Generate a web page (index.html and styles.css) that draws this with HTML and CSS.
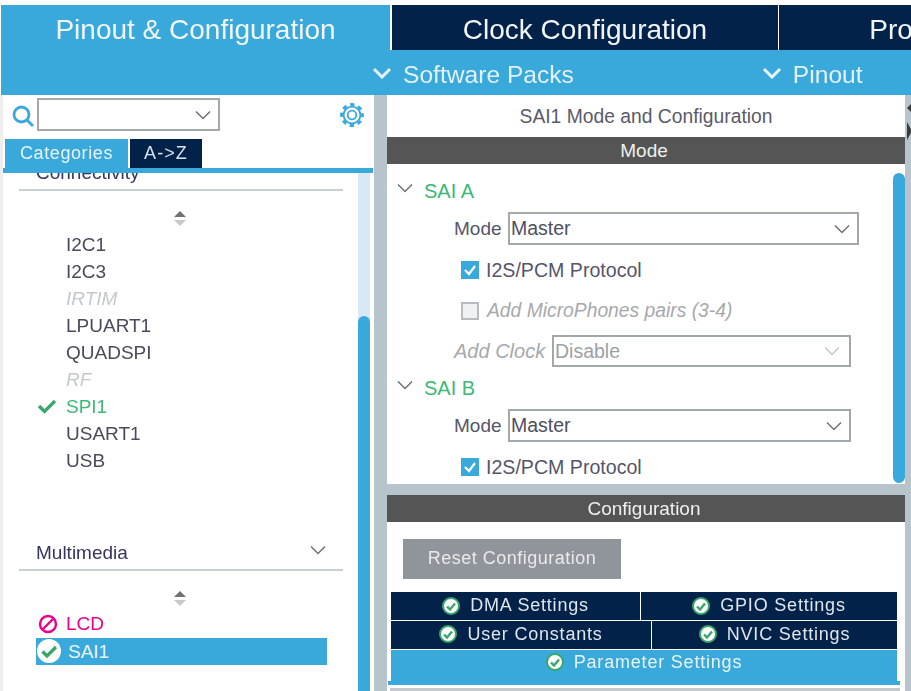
FILE: index.html
```html
<!DOCTYPE html>
<html lang="en">
<head>
<meta charset="utf-8">
<title>Pinout &amp; Configuration</title>
<link rel="stylesheet" href="styles.css">
</head>
<body>
<div class="app">
  <nav class="main-tabs">
    <div class="main-tab active">Pinout &amp; Configuration</div>
    <div class="main-tab">Clock Configuration</div>
    <div class="main-tab">Project Manager</div>
  </nav>
  <div class="subbar">
    <div class="sub-item packs"><svg class="sub-chev" viewBox="0 0 20 12"><path d="M2 2l8 8 8-8"/></svg>Software Packs</div>
    <div class="sub-item pinout"><svg class="sub-chev" viewBox="0 0 20 12"><path d="M2 2l8 8 8-8"/></svg>Pinout</div>
  </div>
  <div class="workspace">
    <aside class="left">
      <div class="search-row">
        <svg class="search-icon" viewBox="0 0 22 22"><circle cx="9.5" cy="9.5" r="7.5"/><path d="M15 15l6 6"/></svg>
        <div class="select search-select"><svg class="chev" viewBox="0 0 16 10"><path d="M1 1.5l7 7 7-7"/></svg></div>
        <svg class="gear" viewBox="0 0 24 24"><circle class="teeth" cx="12" cy="12" r="10.400"/><circle cx="12" cy="12" r="8.400"/><circle cx="12" cy="12" r="4.300"/></svg>
      </div>
      <div class="cat-tabs">
        <div class="cat-tab on">Categories</div>
        <div class="cat-tab">A-&gt;Z</div>
      </div>
      <div class="list-area">
        <div class="list-scroll">
          <div class="cat-head clipped"><span>Connectivity</span></div>
          <div class="sorter"><svg viewBox="0 0 14 16"><path class="up" d="M7 0l6 6H1z"/><path class="down" d="M1 9h12l-6 6z"/></svg></div>
          <ul class="items">
            <li>I2C1</li>
            <li>I2C3</li>
            <li class="off">IRTIM</li>
            <li>LPUART1</li>
            <li>QUADSPI</li>
            <li class="off">RF</li>
            <li class="ok"><svg class="tick" viewBox="0 0 20 16"><path d="M2 8l5.500 5.500L18 3"/></svg>SPI1</li>
            <li>USART1</li>
            <li>USB</li>
          </ul>
          <div class="cat-head second"><span>Multimedia</span><svg class="chev wide" viewBox="0 0 16 10"><path d="M1 1.500l7 7 7-7"/></svg></div>
          <div class="sorter"><svg viewBox="0 0 14 16"><path class="up" d="M7 0l6 6H1z"/><path class="down" d="M1 9h12l-6 6z"/></svg></div>
          <ul class="items">
            <li class="bad"><svg class="ban" viewBox="0 0 20 20"><circle cx="10" cy="10" r="8"/><path d="M4.500 15.500l11-11"/></svg>LCD</li>
            <li class="sel"><svg class="okdot" viewBox="0 0 24 24"><circle cx="12" cy="12" r="12"/><path d="M5.500 12.500l4.500 4.500 9-9"/></svg>SAI1</li>
          </ul>
        </div>
        <div class="track"><div class="thumb"></div></div>
      </div>
    </aside>
    <main class="right">
      <section class="mode-panel">
        <h1 class="panel-title">SAI1 Mode and Configuration</h1>
        <h2 class="bar">Mode</h2>
        <div class="mode-body">
          <div class="form">
            <div class="group-head"><svg class="chev head-chev" viewBox="0 0 16 10"><path d="M1 1.500l7 7 7-7"/></svg>SAI A</div>
            <div class="field first"><label class="flabel">Mode</label><div class="select sel-a">Master<svg class="chev" viewBox="0 0 16 10"><path d="M1 1.500l7 7 7-7"/></svg></div></div>
            <div class="check-row"><span class="cb on"><svg viewBox="0 0 18 18"><path d="M4 9l4 4 6-8"/></svg></span>I2S/PCM Protocol</div>
            <div class="check-row second dis"><span class="cb"></span>Add MicroPhones pairs (3-4)</div>
            <div class="field clock dis"><label class="flabel">Add Clock</label><div class="select sel-c">Disable<svg class="chev" viewBox="0 0 16 10"><path d="M1 1.500l7 7 7-7"/></svg></div></div>
            <div class="group-head b"><svg class="chev head-chev" viewBox="0 0 16 10"><path d="M1 1.500l7 7 7-7"/></svg>SAI B</div>
            <div class="field first"><label class="flabel">Mode</label><div class="select sel-b">Master<svg class="chev" viewBox="0 0 16 10"><path d="M1 1.500l7 7 7-7"/></svg></div></div>
            <div class="check-row"><span class="cb on"><svg viewBox="0 0 18 18"><path d="M4 9l4 4 6-8"/></svg></span>I2S/PCM Protocol</div>
          </div>
          <div class="mode-track"><div class="mode-thumb"></div></div>
        </div>
      </section>
      <section class="config-panel">
        <h2 class="bar">Configuration</h2>
        <button class="reset">Reset Configuration</button>
        <div class="set-tabs">
          <div class="set-row r1">
            <div class="set-tab"><svg class="dot" viewBox="0 0 18 18"><circle cx="9" cy="9" r="8"/><path d="M5 9.500l3 3 5-6"/></svg>DMA Settings</div>
            <div class="set-tab"><svg class="dot" viewBox="0 0 18 18"><circle cx="9" cy="9" r="8"/><path d="M5 9.500l3 3 5-6"/></svg>GPIO Settings</div>
          </div>
          <div class="set-row r2">
            <div class="set-tab"><svg class="dot" viewBox="0 0 18 18"><circle cx="9" cy="9" r="8"/><path d="M5 9.500l3 3 5-6"/></svg>User Constants</div>
            <div class="set-tab"><svg class="dot" viewBox="0 0 18 18"><circle cx="9" cy="9" r="8"/><path d="M5 9.500l3 3 5-6"/></svg>NVIC Settings</div>
          </div>
          <div class="set-tab param"><svg class="dot" viewBox="0 0 18 18"><circle cx="9" cy="9" r="8"/><path d="M5 9.500l3 3 5-6"/></svg>Parameter Settings</div>
        </div>
        <div class="param-line"></div>
        <div class="param-box"></div>
      </section>
    </main>
    <aside class="edge">
      <svg class="edge-arrows" viewBox="0 0 6 46"><path d="M6 0L1 5l5 5z"/><path d="M1 19l5 9-5 9z"/></svg>
    </aside>
  </div>
</div>
</body>
</html>
```

FILE: styles.css
```css
* { box-sizing: border-box; }
html, body { margin: 0; padding: 0; height: 100%; overflow: hidden; background: #fff; }
body { font-family: "Liberation Sans", Arial, sans-serif; color: #4a4a5a; }
h1, h2, ul { margin: 0; padding: 0; font-weight: normal; list-style: none; }
svg { display: block; flex: none; }
.app { width: 911px; height: 691px; padding-top: 5px; display: flex; flex-direction: column; overflow: hidden; filter: blur(0.4px); }

.main-tabs { display: flex; height: 45px; flex: none; padding-left: 1px; gap: 2px; }
.main-tab { flex: none; width: 389px; background: #032249; color: #f2f6fa; font-size: 28px; padding-top: 5px; display: flex; align-items: center; justify-content: center; white-space: nowrap; }
.main-tab + .main-tab { width: 386px; }
.main-tab + .main-tab + .main-tab { margin-left: -1px; }
.main-tab.active { background: #39a9dc; }

.subbar { height: 45px; flex: none; margin-left: 1px; background: #39a9dc; display: flex; color: #e2f1fa; font-size: 24.600px; padding-top: 5px; }
.sub-item { display: flex; align-items: center; gap: 11px; white-space: nowrap; }
.packs { margin-left: 371px; }
.pinout { margin-left: 188px; }
.sub-chev { width: 20px; height: 12px; margin-top: -5px; }
.sub-chev path { fill: none; stroke: #e8f4fb; stroke-width: 3; }

.workspace { flex: 1; min-height: 0; display: flex; background: #b8c4cb; }

.left { width: 374px; flex: none; background: #fff; border-left: 3px solid #eeeeee; display: flex; flex-direction: column; }
.search-row { height: 44px; flex: none; display: flex; align-items: flex-start; position: relative; }
.search-icon { width: 22px; height: 22px; margin: 10px 0 0 9px; }
.search-icon circle, .search-icon path { fill: none; stroke: #39a9dc; stroke-width: 2.800; }
.select { border: 2px solid #a3a8ac; background: #fff; display: flex; align-items: center; justify-content: space-between; font-size: 19.500px; padding: 0 7px 0 1px; color: #4f4f5f; white-space: nowrap; }
.chev path { fill: none; stroke: #6d7175; stroke-width: 1.500; }
.chev { width: 16px; height: 10px; }
.search-select { width: 183px; height: 33px; margin: 3px 0 0 3px; justify-content: flex-end; }
.gear { width: 24px; height: 24px; margin: 8px 0 0 120px; }
.gear circle { fill: none; stroke: #39a9dc; stroke-width: 1.800; }
.gear circle.teeth { stroke-width: 3; stroke-dasharray: 4.300 3.870; stroke-dashoffset: 2.150; }

.cat-tabs { display: flex; gap: 2px; height: 29px; flex: none; margin-left: 2px; }
.cat-tab { background: #032249; color: #d5e4ee; font-size: 18px; letter-spacing: 1.100px; display: flex; align-items: center; justify-content: center; width: 72px; }
.cat-tab.on { background: #39a9dc; width: 123px; color: #e6f3fa; letter-spacing: 0.600px; }

.list-area { flex: 1; min-height: 0; border-top: 5px solid #39a9dc; display: flex; overflow: hidden; margin-right: 1px; }
.list-scroll { width: 355px; flex: none; }
.track { width: 12px; flex: none; background: #d8e8f5; }
.thumb { height: 100%; margin-top: 143px; background: #39a9dc; border-radius: 6px 6px 0 0; }

.cat-head { height: 36px; margin: 0 15px 0 16px; border-bottom: 2px solid #c8d0d6; display: flex; align-items: center; justify-content: space-between; font-size: 19px; color: #35365f; padding: 1px 17px 0; }
.cat-head.clipped { margin-top: -18px; }
.cat-head.second { margin-top: 61px; }
.chev.wide { width: 16px; height: 10px; margin-top: -5px; }
.sorter { height: 40px; display: flex; justify-content: center; align-items: center; padding: 16px 1px 0 0; }
.sorter svg { width: 14px; height: 16px; }
.up { fill: #6e7276; }
.down { fill: #c6cacd; }

.items { margin-left: 33px; width: 291px; font-size: 19px; }
.items li { height: 27px; padding-left: 30px; display: flex; align-items: center; position: relative; color: #4a4a5a; }
.items li.off { color: #c3c8cd; font-style: italic; }
.items li.ok { color: #3cb878; }
.items li.bad { color: #ec008c; padding-bottom: 1px; }
.items li.sel { background: #39a9dc; color: #e8f4fb; padding-left: 32px; }
.tick, .ban, .okdot { position: absolute; }
.tick { width: 20px; height: 16px; left: 1px; top: 5px; }
.tick path { fill: none; stroke: #37a668; stroke-width: 3.200; }
.ban { width: 20px; height: 20px; left: 2px; top: 3px; }
.ban circle, .ban path { fill: none; stroke: #ec008c; stroke-width: 2.400; }
.okdot { width: 24px; height: 24px; left: 1px; top: 1px; }
.okdot circle { fill: #fff; }
.okdot path { fill: none; stroke: #37a668; stroke-width: 3.200; }

.right { flex: none; width: 518px; margin-left: 13px; display: flex; flex-direction: column; gap: 11px; min-height: 0; }
.mode-panel { height: 389px; flex: none; background: #fff; display: flex; flex-direction: column; }
.panel-title { height: 42px; flex: none; display: flex; align-items: center; justify-content: center; font-size: 19.300px; color: #5a5a68; padding-top: 1px; }
.bar { height: 27px; flex: none; background: #545554; color: #f0f0f0; font-size: 19px; padding-top: 1px; padding-right: 4px; display: flex; align-items: center; justify-content: center; }
.mode-body { flex: 1; min-height: 0; display: flex; overflow: hidden; }
.form { width: 506px; flex: none; padding-top: 9px; font-size: 19px; overflow: hidden; }
.group-head { height: 36px; display: flex; align-items: center; color: #3cb878; font-size: 20px; padding-left: 10px; gap: 11px; }
.head-chev { margin-top: -6px; }
.group-head.b { margin-top: 3px; }
.field { height: 33px; display: flex; align-items: center; padding-left: 67px; white-space: nowrap; color: #55556a; font-size: 19px; }
.field.first { margin-top: 3px; }
.flabel { width: 54px; flex: none; }
.sel-a { width: 351px; height: 33px; }
.sel-b { width: 343px; height: 33px; }
.field.clock { margin-top: 4px; height: 32px; }
.field.clock .flabel { width: 98px; color: #a6a9ad; font-style: italic; font-size: 20px; }
.sel-c { width: 299px; height: 32px; color: #9da1a5; padding-right: 9px; }
.sel-c .chev path { stroke: #c5c9cc; }
.check-row { height: 40px; margin-top: 5px; padding-left: 74px; display: flex; align-items: center; gap: 7px; color: #55556a; font-size: 19.600px; white-space: nowrap; }
.check-row.second { margin-top: 1px; font-size: 19.300px; gap: 8px; }
.check-row.dis { color: #a6a9ad; font-style: italic; }
.cb { width: 18px; height: 18px; flex: none; background: #f0f1f3; border: 2px solid #b8bcc0; }
.cb.on { background: #39a9dc; border: 0; }
.cb svg { width: 18px; height: 18px; }
.cb path { fill: none; stroke: #fff; stroke-width: 2.200; }
.mode-track { flex: none; width: 12px; }
.mode-thumb { margin-top: 9px; height: 310px; background: #39a9dc; border-radius: 6px; }

.config-panel { flex: 1; min-height: 0; background: #fff; display: flex; flex-direction: column; overflow: hidden; }
.reset { width: 218px; height: 40px; margin: 17px 0 0 16px; flex: none; border: 0; background: #8f959b; color: #e8eaec; font: 18px "Liberation Sans", Arial, sans-serif; letter-spacing: 0.500px; padding: 0 0 2px; }
.set-tabs { margin: 13px 8px 0 4px; display: flex; flex-direction: column; gap: 1px; }
.set-row { display: flex; gap: 1px; height: 28px; }
.set-tab { background: #032249; color: #dfe6ec; font-size: 18px; letter-spacing: 0.800px; padding-bottom: 1px; display: flex; align-items: center; justify-content: center; gap: 10px; white-space: nowrap; }
.r1 .set-tab:first-child { width: 249px; }
.r1 .set-tab:last-child { width: 256px; }
.r2 .set-tab { padding-bottom: 2px; }
.r2 .set-tab:first-child { width: 260px; }
.r2 .set-tab:last-child { width: 245px; }
.set-tab.param { background: #39a9dc; height: 31px; color: #e8f4fb; padding-bottom: 7px; }
.dot { width: 18px; height: 18px; }
.dot circle { fill: #fff; stroke: #37a668; stroke-width: 2; }
.dot path { fill: none; stroke: #37a668; stroke-width: 2.400; }
.param-line { height: 4px; background: #39a9dc; margin: 0 5px 0 1px; flex: none; }
.param-box { margin: 3px 5px 0 3px; height: 40px; border: 2px solid #c4c9cd; }

.edge { flex: 1; min-width: 0; overflow: hidden; }
.edge-arrows { width: 6px; height: 46px; margin: 8px 0 0 1px; fill: #3a3a3a; }
```
